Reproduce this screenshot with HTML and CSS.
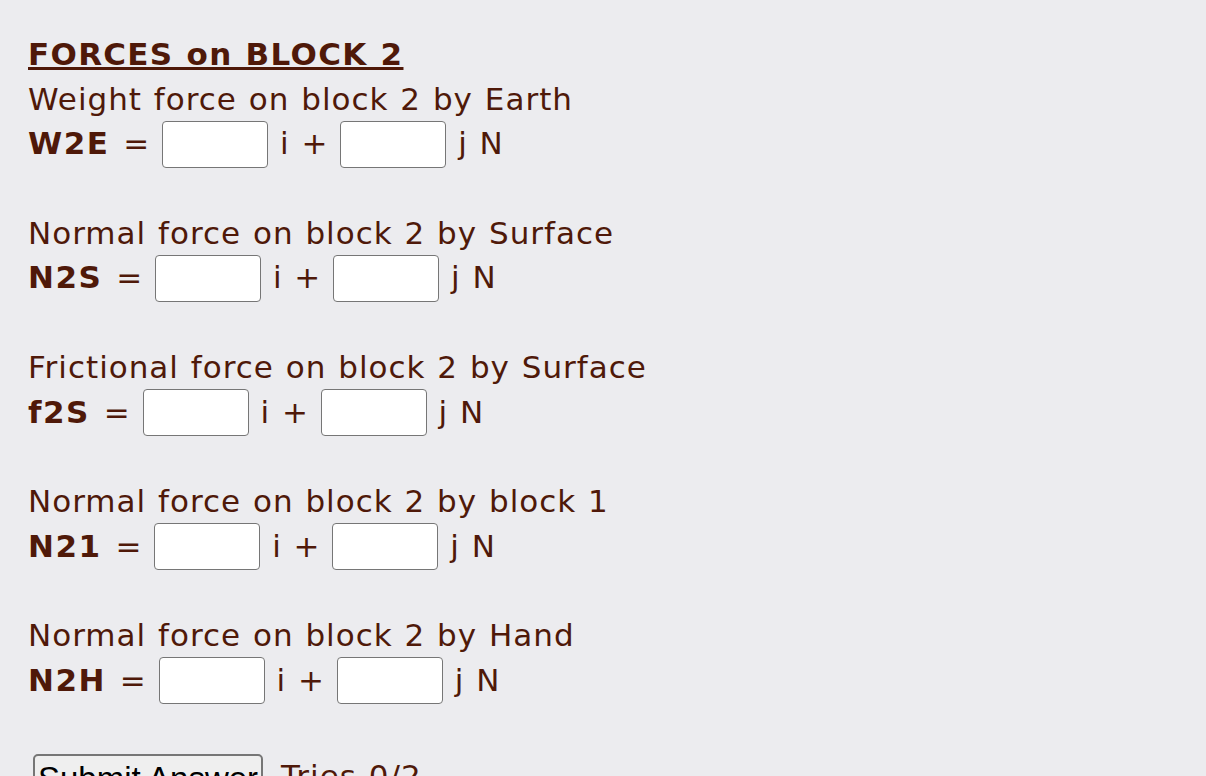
FILE: index.html
```html
<!DOCTYPE html>
<html>
<head>
<meta charset="utf-8">
<link rel="stylesheet" href="styles.css">
</head>
<body>
<div class="page">
  <div class="heading">FORCES on BLOCK 2</div>
  <div class="group">
    <div class="line">Weight force on block 2 by Earth</div>
    <div class="line"><b class="sym">W2E</b> = <input class="box" type="text"> i + <input class="box" type="text"> j N</div>
  </div>
  <div class="group">
    <div class="line">Normal force on block 2 by Surface</div>
    <div class="line"><b class="sym">N2S</b> = <input class="box" type="text"> i + <input class="box" type="text"> j N</div>
  </div>
  <div class="group">
    <div class="line">Frictional force on block 2 by Surface</div>
    <div class="line"><b class="sym">f2S</b> = <input class="box" type="text"> i + <input class="box" type="text"> j N</div>
  </div>
  <div class="group">
    <div class="line">Normal force on block 2 by block 1</div>
    <div class="line"><b class="sym">N21</b> = <input class="box" type="text"> i + <input class="box" type="text"> j N</div>
  </div>
  <div class="group">
    <div class="line">Normal force on block 2 by Hand</div>
    <div class="line"><b class="sym">N2H</b> = <input class="box" type="text"> i + <input class="box" type="text"> j N</div>
  </div>
  <div class="submit-row">
    <button class="submit" type="button">Submit Answer</button>
    <span class="tries">Tries 0/2</span>
  </div>
</div>
</body>
</html>
```
FILE: styles.css
```css
html, body {
  margin: 0;
  padding: 0;
  background: #ececef;
}
.page {
  padding: 32px 0 0 28px;
  font-family: "DejaVu Sans", Verdana, sans-serif;
  font-size: 31px;
  line-height: 44.7px;
  letter-spacing: 1px;
  word-spacing: 1px;
  color: #4f1909;
}
.heading {
  font-weight: bold;
  letter-spacing: 1.3px;
  text-decoration: underline;
  height: 44.7px;
}
.group {
  margin-bottom: 44.7px;
}
.line {
  height: 44.7px;
  white-space: nowrap;
}
.sym {
  letter-spacing: 1.5px;
  margin-right: 2px;
}
.box {
  box-sizing: border-box;
  width: 106px;
  height: 47px;
  border: 1px solid #767676;
  border-radius: 4px;
  background: #fff;
  vertical-align: middle;
  margin: -5px 0 -2px 0;
  padding: 0;
  font-size: 20px;
}
.submit-row {
  padding-left: 5px;
  margin-top: 52px;
  white-space: nowrap;
}
.submit {
  font-family: "Liberation Sans", Arial, sans-serif;
  font-size: 33px;
  letter-spacing: 0;
  word-spacing: 0;
  color: #000;
  background: #efefef;
  border: 2px solid #767676;
  border-radius: 5px;
  padding: 0 3px;
  height: 50px;
  vertical-align: top;
}
.tries {
  margin-left: 6px;
}
```
